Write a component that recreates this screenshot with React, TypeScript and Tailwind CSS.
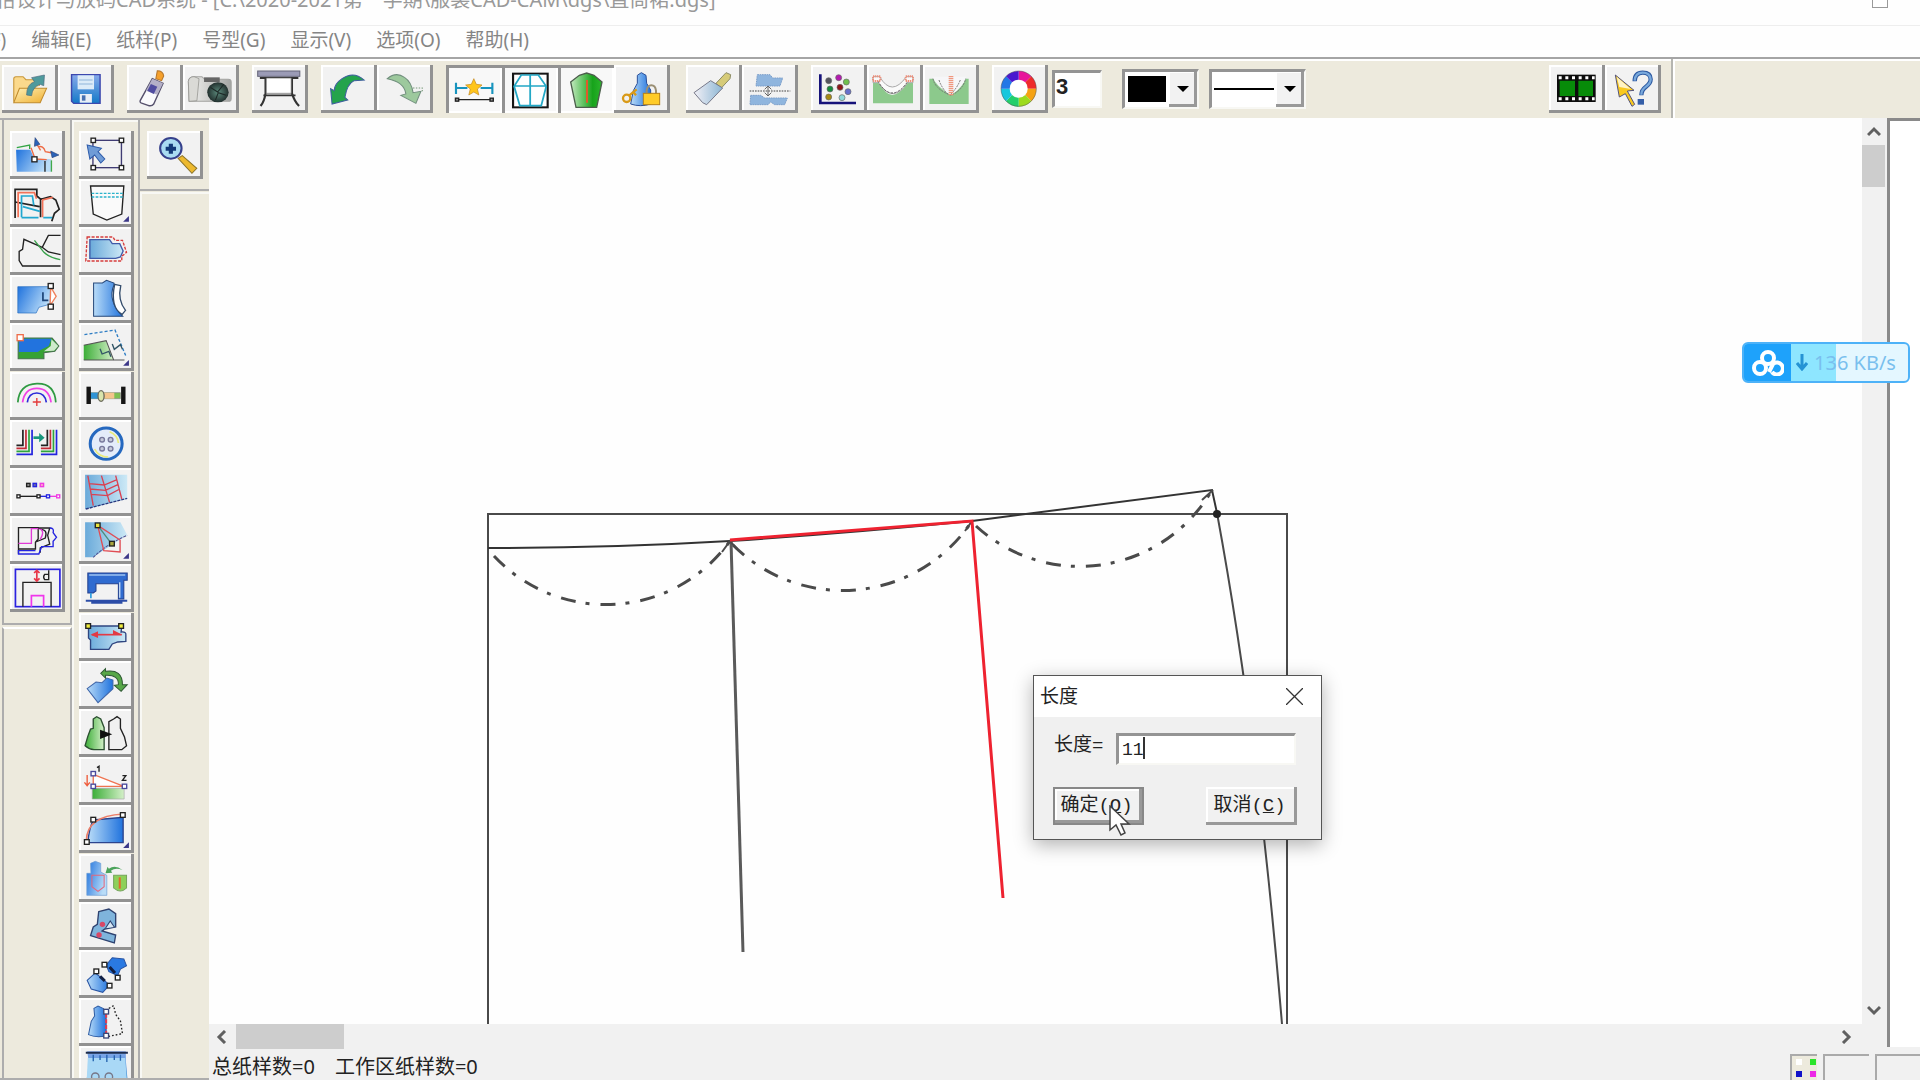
import React, { ReactNode } from "react";

type Tool = { name: string; box: string; art: ReactNode; pressed?: boolean };

const K = "#222";

const Sq = ({ x, y, s = 13, f = "#fff", c = K }: { x: number; y: number; s?: number; f?: string; c?: string }) => (
  <rect x={x - s / 2} y={y - s / 2} width={s} height={s} fill={f} stroke={c} strokeWidth="4" />
);

const Gradients = () => (
  <svg className="absolute h-0 w-0" aria-hidden="true">
    <defs>
      <linearGradient id="blue" x1="0" x2="1" y1="0" y2="0.4"><stop offset="0" stopColor="#1f72dd" /><stop offset="1" stopColor="#b9dcf8" /></linearGradient>
      <linearGradient id="blueR" x1="0" x2="1"><stop offset="0" stopColor="#b9dcf8" /><stop offset="1" stopColor="#1f72dd" /></linearGradient>
      <linearGradient id="sky" x1="0" x2="1"><stop offset="0" stopColor="#6aaada" /><stop offset="1" stopColor="#cde9f6" /></linearGradient>
      <linearGradient id="green" x1="0" x2="1"><stop offset="0" stopColor="#3cae38" /><stop offset="1" stopColor="#d4f0c8" /></linearGradient>
      <linearGradient id="greenR" x1="0" x2="1"><stop offset="0" stopColor="#c4eac0" /><stop offset="0.7" stopColor="#17a31b" /><stop offset="1" stopColor="#2cb52c" /></linearGradient>
      <linearGradient id="gold" x1="0" x2="1" y1="0" y2="1"><stop offset="0" stopColor="#fff0b8" /><stop offset="1" stopColor="#f0b030" /></linearGradient>
      <linearGradient id="steel" x1="0" x2="1"><stop offset="0" stopColor="#f2f0f6" /><stop offset="1" stopColor="#8cb6d4" /></linearGradient>
      <linearGradient id="disk" x1="0" x2="0" y1="0" y2="1"><stop offset="0" stopColor="#86a9ea" /><stop offset="1" stopColor="#1479c8" /></linearGradient>
      <linearGradient id="cam" x1="0" x2="1"><stop offset="0" stopColor="#f2f2f0" /><stop offset="1" stopColor="#a4a6a4" /></linearGradient>
      <radialGradient id="lens"><stop offset="0" stopColor="#5c8a7c" /><stop offset="1" stopColor="#22302e" /></radialGradient>
    </defs>
  </svg>
);

const fileTools: Tool[] = [
  { name: "打开", box: "5 195 157 144", art: <>
    <path d="M38 305V236q0-6 6-6h20l8 9h38v18" fill="#fbd98c" stroke="#c89638" strokeWidth="3" />
    <path d="M38 308l16-43h76l-18 43z" fill="url(#gold)" stroke="#c08a2c" strokeWidth="3" />
    <path d="M74 285q0-32 22-40l-8-12 36-8-2 32-10-4q-22 8-24 34z" fill="#4f9a9c" stroke="#4a6a80" strokeWidth="2" /></> },
  { name: "保存", box: "161 195 157 144", art: <>
    <path d="M199 224h80v86h-74l-6-6z" fill="url(#disk)" stroke="#3c48ae" strokeWidth="4" />
    <rect x="216" y="226" width="46" height="42" fill="#dcebf8" /><path d="M220 240h38M220 252h38" stroke="#a9c8e4" strokeWidth="4" />
    <rect x="222" y="282" width="34" height="26" fill="#e8eef6" /><rect x="228" y="286" width="10" height="16" fill="#4770b0" /></> },
];
const editTools: Tool[] = [
  { name: "读纸样", box: "357 195 157 144", art: <>
    <path d="M394 302l34-66 30 14-26 62q-6 8-16 4l-16-6q-8-2-6-8z" fill="#fafafc" stroke="#55506c" strokeWidth="4" />
    <path d="M410 272l18-36 30 14-16 34z" fill="#b4b0c8" /><path d="M414 272l10-20 18 8-10 22z" fill="#504ca0" />
    <path d="M438 236l4-24q16 0 18 16l-6 14z" fill="#f5a02c" stroke="#b5762c" strokeWidth="3" /></> },
  { name: "数码相机", box: "513 195 157 144", art: <>
    <path d="M530 304l-2-60q2-14 16-14h22l8 8h66q8 0 8 8v50q0 8-8 8z" fill="url(#cam)" stroke="#a2a2a0" strokeWidth="3" />
    <path d="M530 304l-2-60q2-14 16-14l14 6-6 66z" fill="#dadad6" stroke="#8c8c88" strokeWidth="2" />
    <path d="M572 232h44v14h-44z" fill="#666" /><circle cx="611" cy="277" r="30" fill="url(#lens)" /><path d="M590 262l20 14 18-24M604 300l8-22 22 8" stroke="#1d2826" strokeWidth="3" fill="none" /></> },
];
const plotTools: Tool[] = [
  { name: "绘图", box: "708 195 157 144", art: <>
    <rect x="724" y="213" width="118" height="16" fill="#9b9bb6" stroke="#66667a" strokeWidth="3" />
    <path d="M730 234h108M746 234v46q-4 26-14 38M820 234v46q8 26 20 38" stroke="#333" strokeWidth="6" fill="none" />
    <path d="M748 234h70v46h-70z" fill="#fff" stroke="#666" strokeWidth="2" /><path d="M740 286h90" stroke="#333" strokeWidth="5" /></> },
];
const undoTools: Tool[] = [
  { name: "撤消", box: "901 195 157 144", art: <path d="M928 266l4 46 44-12-8-8q6-40 26-50l28-2q-30-28-62-4-22 16-22 36z" fill="#24a34c" stroke="#3f5f9e" strokeWidth="3" /> },
  { name: "重做", box: "1057 195 157 144", art: <><path d="M1086 236q24-22 48-4 20 14 24 46l22-4-14 36-42-24 14-4q-4-36-52-46z" fill="#9dc99d" stroke="#72907e" strokeWidth="3" /><path d="M1158 264h26v10" stroke="#79997a" strokeWidth="3" strokeDasharray="4 4" fill="none" /></> },
];
const viewTools: Tool[] = [
  { name: "显示/隐藏变量标注", box: "1253 195 157 144", pressed: true, art: <>
    <path d="M1281 248v34M1383 248v34M1281 264h32M1350 264h33" stroke="#1794be" strokeWidth="6" />
    <path d="M1331 236l7 17 16 2-13 12 4 18-14-9-14 9 4-18-13-12 16-2z" fill="#ffc51c" stroke="#c38722" strokeWidth="2" />
    <path d="M1285 299h96" stroke={K} strokeWidth="4" /><Sq x={1284} y={299} s={9} f="#999" /><Sq x={1381} y={299} s={9} f="#999" /></> },
  { name: "显示/隐藏结构线", box: "1410 195 157 144", pressed: true, art: <>
    <rect x="1441" y="221" width="97" height="101" fill="#fff" stroke="#151515" strokeWidth="6" />
    <path d="M1464 225h48l22 34-14 58h-60l-16-58zM1445 258h90M1489 223v94" fill="none" stroke="#23a8c6" strokeWidth="5" /></> },
  { name: "显示/隐藏纸样", box: "60 195 168 144", pressed: true, art: <>
    <path d="M98 246l26-20 22-7 22 7 24 20-16 76h-62z" fill="url(#greenR)" stroke="#4c5e4c" strokeWidth="4" /><path d="M147 240v68" stroke="#e05a2c" strokeWidth="6" /></> },
  { name: "仅显示一个纸样", box: "230 195 168 144", art: <>
    <path d="M300 226l12-8 14 8 2 24 12 20v42q-30 10-60 0l8-40 12-22z" fill="url(#blueR)" stroke="#2a4f99" strokeWidth="3" />
    <circle cx="268" cy="295" r="11" fill="none" stroke="#d99a18" strokeWidth="7" /><path d="M276 286l22-18M288 276l8 10" stroke="#d99a18" strokeWidth="7" />
    <path d="M328 284v-12q2-16 14-16t14 16v12" fill="none" stroke="#9a8f74" strokeWidth="6" /><rect x="318" y="280" width="49" height="34" fill="#ffcb28" stroke="#b5801a" strokeWidth="3" /></> },
];
const paintTools: Tool[] = [
  { name: "将工作区的纸样收起", box: "436 195 168 144", art: <>
    <path d="M526 250l30-32 14 6-2 12-26 28z" fill="#d6cb78" stroke="#8c8c66" strokeWidth="3" />
    <path d="M460 278l50-36 36 22-48 50-12-6z" fill="url(#steel)" stroke="#77798a" strokeWidth="3" /></> },
  { name: "对称纸样", box: "604 195 168 144", art: <>
    <path d="M650 224h38l8 10h30l-8 24h-72zM630 286h30l12 8h68l-8 20h-30l-12-8-8 8h-54z" fill="#8fb5de" stroke="#7d9fca" strokeWidth="3" strokeDasharray="5 2" />
    <path d="M627 273h122" stroke="#444" strokeWidth="3" strokeDasharray="5 3" /><path d="M682 260v28M672 268l10-10 10 10M672 278l10 10 10-10" stroke="#666" strokeWidth="3" fill="none" /></> },
];
const gradeTools: Tool[] = [
  { name: "点放码表", box: "810 195 168 144", art: <>
    <path d="M838 223v86h107" stroke="#16127a" strokeWidth="8" fill="none" />
    {[[863, 242, "#555560"], [893, 233, "#b31ab0"], [916, 246, "#6fc04e"], [867, 267, "#178a3c"], [897, 262, "#8e1518"], [921, 275, "#6670cc"], [863, 291, "#a58912"], [903, 293, "#8fdadb"]].map(([x, y, c]) => (
      <circle key={String(x) + String(y)} cx={x as number} cy={y as number} r="9" fill={c as string} stroke="#666" strokeWidth="2" />))}</> },
  { name: "定型放码", box: "980 195 168 144", art: <>
    <path d="M998 246l20 2q36 74 80 0l20-2v64H998z" fill="#8cc98c" /><path d="M998 230h20q36 62 80 0h20v18h-16q-44 66-88 0h-16z" fill="#fafafa" stroke="#aaa" strokeWidth="3" />
    <path d="M1012 242q42 74 92 0" fill="none" stroke="#555" strokeWidth="3" strokeDasharray="7 4" /><path d="M998 229h22v14h-22zM1096 229h22v14h-22z" fill="none" stroke="#ed907c" strokeWidth="6" strokeDasharray="4 2" /></> },
  { name: "等幅高放码", box: "1148 195 168 144", art: <>
    <path d="M1167 236h118v76h-118z" fill="#8cc98c" /><path d="M1176 230h102q-8 30-46 56-44-26-56-56z" fill="#f6f6f8" />
    <path d="M1178 236q6 32 54 50 36-16 44-50M1196 240q8 24 26 42M1260 240q-10 24-28 42" fill="none" stroke="#777" strokeWidth="3" strokeDasharray="6 3" /><path d="M1232 228v58" stroke="#f0977e" strokeWidth="14" strokeDasharray="4 2" /></> },
];

const wheel: [string, string][] = [
  ["#e8149b", "M1436 213A53 53 0 0 1 1474 229L1456 247A27 27 0 0 0 1436 239Z"], ["#ee2b2b", "M1474 229A53 53 0 0 1 1489 266L1463 266A27 27 0 0 0 1456 247Z"],
  ["#f5a214", "M1489 266A53 53 0 0 1 1474 304L1456 285A27 27 0 0 0 1463 266Z"], ["#9ddb1d", "M1474 304A53 53 0 0 1 1436 320L1436 293A27 27 0 0 0 1456 285Z"],
  ["#23cf6b", "M1436 320A53 53 0 0 1 1398 304L1416 285A27 27 0 0 0 1436 293Z"], ["#18c7dd", "M1398 304A53 53 0 0 1 1383 266L1409 266A27 27 0 0 0 1416 285Z"],
  ["#2277e6", "M1383 266A53 53 0 0 1 1398 229L1416 247A27 27 0 0 0 1409 266Z"], ["#4a18cf", "M1398 229A53 53 0 0 1 1436 213L1436 239A27 27 0 0 0 1416 247Z"],
];
const colorTools: Tool[] = [{ name: "颜色设置", box: "1356 195 168 144", art: <>{wheel.map(([c, d]) => <path key={c} d={d} fill={c} />)}<circle cx="1436" cy="266" r="53" fill="none" stroke="#555" strokeOpacity="0.5" strokeWidth="3" /><circle cx="1436" cy="266" r="26" fill="#fff" /></> }];
const helpTools: Tool[] = [
  { name: "播放演示", box: "148 195 168 144", art: <>
    <rect x="172" y="224" width="116" height="82" fill="#0c0c0c" /><path d="M180 242h46v46h-46zM236 242h44v46h-44z" fill="#078b09" />
    <path d="M177 233h108M177 296h108" stroke="#fff" strokeWidth="9" strokeDasharray="9 11" /></> },
  { name: "帮助", box: "315 195 168 144", art: <>
    <path d="M346 225l56 46-20 2 22 40-8 6-20-38-18 10z" fill="#f9c91f" stroke="#55557c" strokeWidth="3" /><path d="M350 230l42 37-34-6z" fill="#fff3c4" />
    <path d="M404 244q0-26 24-26t24 20q0 12-14 22t-14 26" fill="none" stroke="#2e5aa2" strokeWidth="13" /><path d="M404 242q2-24 24-24t24 20q0 12-14 22t-14 24" fill="none" stroke="#79a9dc" strokeWidth="7" /><rect x="413" y="297" width="19" height="17" fill="#355ea8" /></> },
];

const designTools: Tool[] = [
  { name: "选择", box: "30 48 162 144", art: <>
    <path d="M48 104h42l12 28h50v38H50z" fill="url(#blue)" /><path d="M50 98l38-8v12" stroke="#34a544" strokeWidth="4" fill="none" />
    <path d="M92 98l12 34 34 2" stroke="#ee6a44" strokeWidth="4" fill="none" /><path d="M112 96q16-6 22 14l22 4M106 82l14 24" stroke="#ee6a44" strokeWidth="4" fill="none" />
    <path d="M104 68l14 20-16 6zM150 108l24 12-20 8z" fill="#2a62b8" stroke="#28457c" strokeWidth="2" /><path d="M133 138v32" stroke={K} strokeWidth="4" /><path d="M152 136v34" stroke="#43a949" strokeWidth="4" /><Sq x={102} y={133} s={15} /></> },
  { name: "结构线", box: "30 193 162 144", art: <>
    <path d="M45 310v-86h64v20l12 10 28-8 16 10 10 28-14 12-8 24M45 262l72 14M120 250v58" fill="none" stroke={K} strokeWidth="5" />
    <path d="M54 308v-74h48l6 18M126 308v-52l30-8" fill="none" stroke="#f4745a" strokeWidth="5" /><path d="M64 308v-64h32l4 28M68 276l50 14M64 309h50M128 309h26" fill="none" stroke="#22a7d0" strokeWidth="5" /></> },
  { name: "智能笔", box: "30 338 162 144", art: <>
    <path d="M179 363h-36l-18 36-54-24-4 30-10 6v28l10 16h112M125 399l18 14 36 8" fill="none" stroke={K} strokeWidth="4" />
    <path d="M102 378l28 36q16 16 48 22" fill="none" stroke="#38a14a" strokeWidth="4" /></> },
  { name: "剪断线", box: "30 482 162 144", art: <>
    <path d="M53 517h96v52l-34 10-8 17H53z" fill="url(#blue)" stroke="#226bc0" strokeWidth="2" /><path d="M127 534v24h16" stroke="#1c4377" strokeWidth="5" fill="none" />
    <path d="M150 518l-2 56 18-28z" stroke="#ef815c" strokeWidth="4" fill="#fff" /><Sq x={150} y={515} s={15} /><Sq x={150} y={577} s={15} /></> },
  { name: "旋转粘贴", box: "30 627 162 144", art: <>
    <path d="M54 672h100l20 24-12 16-32 4v18H54z" fill="#36a233" stroke="#46704c" strokeWidth="3" /><path d="M56 674h96l-8 22-24 12-8 6H56z" fill="#2273de" /><path d="M152 676l20 20-12 14-30 2 20-16z" fill="#cfeacc" /><Sq x={60} y={671} s={18} c="#ee6e4c" /></> },
  { name: "圆弧", box: "30 6 162 144", art: <>
    <path d="M53 97q4-54 56-56t56 56" fill="none" stroke="#2f9a42" strokeWidth="5" /><path d="M67 97q6-42 42-42t42 42" fill="none" stroke="#f040e6" strokeWidth="5" /><path d="M81 97q4-28 28-28t28 28" fill="none" stroke="#2b2bd8" strokeWidth="5" /><path d="M97 96h24M109 84v24" stroke="#e33b3b" strokeWidth="4" /></> },
  { name: "平行线", box: "30 151 162 144", art: <>
    {[[0, "#2323de"], [9, "#2fa53c"], [18, "#c42c38"], [27, K]].map(([o, c]) => { const n = o as number; return (
      <path key={n} d={`M${95 - n} 180v${74 - n}H49M${167 - n} 180v${74 - n}H121`} fill="none" stroke={c as string} strokeWidth="5" />); })}
    <path d="M99 204h22" stroke="#17967c" strokeWidth="8" /><path d="M116 190l16 14-16 14z" fill="#17967c" /></> },
  { name: "点对齐", box: "30 295 162 144", art: <>
    <path d="M55 380h60" stroke={K} strokeWidth="4" /><path d="M115 380h28" stroke="#2424e0" strokeWidth="4" /><path d="M143 380h28" stroke="#ef3be3" strokeWidth="4" />
    <Sq x={55} y={380} s={9} /><Sq x={114} y={380} s={9} /><Sq x={142} y={380} s={9} c="#2424e0" /><Sq x={172} y={380} s={9} c="#ef3be3" /><Sq x={84} y={346} s={10} f="#888" /><Sq x={103} y={346} s={10} c="#2424e0" f="#66a" /><Sq x={124} y={346} s={10} c="#ef3be3" f="#f9c" /></> },
  { name: "套排", box: "30 440 162 144", art: <>
    <path d="M55 475h58v34l-8 10v20H55zM55 539v14M120 480q22 0 14 26l-28 12" fill="none" stroke={K} strokeWidth="4" /><path d="M55 522h38v-44h22q20 4 4 32" fill="none" stroke="#e23ad8" strokeWidth="4" /><path d="M113 476h34l-6 22 6 26-28 12v14" fill="none" stroke={K} strokeWidth="4" />
    <path d="M147 476q14 0 10 14l10 14-10 12v16h-34l-8 22H55v-10h50" fill="none" stroke="#2525e0" strokeWidth="4" /></> },
  { name: "测量", box: "30 585 162 144", art: <>
    <rect x="46" y="601" width="131" height="112" fill="none" stroke="#2b22e0" strokeWidth="5" /><path d="M68 713v-73h83v73" fill="none" stroke={K} strokeWidth="4" /><path d="M93 713v-33h36v33" fill="none" stroke="#f036ec" strokeWidth="5" />
    <path d="M109 606v28M101 612l8-8 8 8M101 628l8 8 8-8" fill="none" stroke="#e73648" strokeWidth="5" /><path d="M144 604v28h-12q-6-8 0-16h12" fill="none" stroke={K} strokeWidth="4" /></> },
];

const Corner = ({ x, y }: { x: number; y: number }) => <path d={`M${x} ${y}v-17l-17 17z`} fill="#3b3788" />;
const patternTools: Tool[] = [
  { name: "选择纸样控制点", box: "238 48 162 144", art: <>
    <rect x="279" y="76" width="84" height="82" fill="none" stroke="#403c74" strokeWidth="4" /><Sq x={280} y={76} /><Sq x={363} y={76} /><Sq x={280} y={158} /><Sq x={363} y={158} />
    <path d="M262 90l42 10-10 10 20 22-12 12-18-24-14 12z" fill="#6f9bd6" stroke="#2e5cab" strokeWidth="3" /></> },
  { name: "缝迹线", box: "238 193 162 144", art: <>
    <path d="M272 214h98l-6 84-44 18-40-18z" fill="#fafafa" stroke={K} strokeWidth="4" /><path d="M275 236h92M275 247h92" stroke="#2bb3cb" strokeWidth="4" strokeDasharray="8 4" /><Corner x={385} y={321} /></> },
  { name: "加缝份", box: "238 338 162 144", art: <>
    <path d="M270 376h58l8 12h22l10 22-8 18-14 4h-76z" fill="url(#sky)" stroke="#3e5aa8" strokeWidth="4" /><path d="M262 368h76l6 10h22l12 36-14 12v14H258z" fill="none" stroke="#d63c3c" strokeWidth="4" strokeDasharray="9 4" /></> },
  { name: "做衬", box: "238 482 162 144", art: <>
    <path d="M281 506h26l12-8 22 8v6q-20 46 26 94h-86z" fill="url(#blueR)" stroke="#27487a" strokeWidth="3" /><path d="M343 510l18 4q-10 44 14 74l-10 12q-36-20-22-90z" fill="#fff" stroke="#334c6c" strokeWidth="4" /></> },
  { name: "眼位", box: "238 627 162 144", art: <>
    <path d="M252 694l66-14 22 58h-88z" fill="url(#green)" /><path d="M252 694l66-14 22 58" fill="none" stroke="#555" strokeWidth="3" /><path d="M254 662l90-14 32 78" fill="none" stroke="#2c7cc4" strokeWidth="4" strokeDasharray="9 6" /><path d="M300 704l6 16 20-8 6 16M336 690l6 16 18-14 6 14" fill="none" stroke="#356" strokeWidth="4" /><path d="M252 738h120" stroke="#555" strokeWidth="3" /><Corner x={385} y={755} /></> },
  { name: "钻孔", box: "238 6 162 144", art: <>
    <path d="M272 68h88v18h-88z" fill="#7ec050" stroke="#888" strokeWidth="2" /><path d="M272 68h30v18h-30z" fill="#2f94d6" /><path d="M310 68h32v18h-32z" fill="#f4c48c" /><rect x="260" y="50" width="13" height="52" fill="#151515" /><rect x="362" y="50" width="13" height="52" fill="#151515" /><ellipse cx="303" cy="78" rx="9" ry="16" fill="#d9e4ac" stroke="#6c6c5c" strokeWidth="4" /></> },
  { name: "扣位", box: "238 151 162 144", art: <>
    <circle cx="318" cy="222" r="47" fill="#e4ecfa" stroke="#2568bf" strokeWidth="9" /><path d="M284 238q12 24 40 24M328 186q24 10 26 34" stroke="#e9ec7a" strokeWidth="5" fill="none" />
    {[[306, 210], [331, 210], [306, 237], [331, 237]].map(([x, y]) => <circle key={x + "-" + y} cx={x} cy={y} r="7" fill="#c4c8d8" stroke="#77789c" strokeWidth="4" />)}</> },
  { name: "皱褶", box: "238 295 162 144", art: <>
    <path d="M256 315h124v72l-124 32z" fill="url(#sky)" /><path d="M264 318l16 90M304 318l24 80M346 318l18 70M268 342l44 4 38-16M270 358l46 4 38-18M274 374l48 4 36-20" fill="none" stroke="#d94252" strokeWidth="4" /><path d="M258 418l122-32" stroke="#2a3a80" strokeWidth="4" strokeDasharray="9 3" /></> },
  { name: "分割", box: "238 440 162 144", art: <>
    <path d="M256 459h104l20 38-70 46-30 21h-24z" fill="url(#sky)" /><path d="M280 564q40-40 100-66" fill="none" stroke="#4e4e90" strokeWidth="3" strokeDasharray="9 3" /><path d="M293 468l66 44v36l-48-4z" fill="none" stroke="#e04c54" strokeWidth="4" /><path d="M293 468l40 54" stroke="#4c8c7c" strokeWidth="4" /><Sq x={293} y={468} s={14} f="#e8e53c" /><Sq x={335} y={523} s={14} f="#a8a53c" /><Corner x={385} y={568} /></> },
  { name: "缝纫", box: "238 585 162 144", art: <>
    <path d="M264 612h116v22h-10v56h-16v-46h-66v22l-8 6h-16z" fill="#2f6bd0" stroke="#24418e" strokeWidth="3" /><path d="M268 618h106" stroke="#9cc0f0" strokeWidth="5" /><path d="M258 692h122v6h-14v6h-92v-6h-16z" fill="#2c4da8" /><path d="M273 672v16" stroke="#2d9de0" strokeWidth="5" /><path d="M358 640v46" stroke="#c8dcf6" strokeWidth="4" /></> },
  { name: "布纹线", box: "238 -21 162 144", art: <>
    <path d="M266 18h98l-2 18q16-2 14 10v18l-24 2-16 6-10 16h-54v-28l-6-6z" fill="url(#sky)" stroke="#2f4580" strokeWidth="4" /><path d="M276 44h88" stroke="#e33a44" strokeWidth="5" /><path d="M272 44l22-10v20zM366 44l-28-14v14z" fill="#e33a44" /><Sq x={265} y={18} s={14} f="#f2ee3e" /><Sq x={362} y={18} s={14} f="#f2ee3e" /></> },
  { name: "旋转", box: "238 123 162 144", art: <>
    <path d="M262 206l26-20 18 2 14-14 18 6v26l-44 42z" fill="url(#blueR)" stroke="#4067aa" strokeWidth="3" /><path d="M302 160l14-14v8q50-8 50 40h14l-18 20-20-18 12-2q2-30-38-28v8z" fill="#58a848" stroke="#2f5a34" strokeWidth="3" /></> },
  { name: "水平垂直翻转", box: "238 268 162 144", art: <>
    <path d="M280 298l10-7 12 7 10 26v66h-30q-16-2-26-12l8-28 8-22 8-2z" fill="url(#green)" stroke="#2b5030" strokeWidth="4" /><path d="M326 390v-84l14-8 10-7 10 7v28l12 26 6 26-14 12z" fill="#f0f0f0" stroke={K} strokeWidth="4" /><path d="M300 330l36 14-36 14z" fill="#0f0f0f" /></> },
  { name: "水平垂直校正", box: "238 412 162 144", art: <>
    <path d="M277 506h94v32h-94z" fill="url(#green)" stroke="#aaa" strokeWidth="2" /><path d="M280 464l90 36h-90z" fill="#fff" stroke="#ef7452" strokeWidth="4" /><path d="M262 466v34M254 488l8 10 8-10" fill="none" stroke="#ef5c3c" strokeWidth="4" /><Sq x={280} y={462} c="#4a4a9c" /><Sq x={280} y={500} c="#4a4a9c" /><Sq x={372} y={500} c="#4a4a9c" /><path d="M291 444l6-4v16M366 468h10l-10 14h12" fill="none" stroke={K} strokeWidth="4" /></> },
  { name: "重新顺滑曲线", box: "238 557 162 144", art: <>
    <path d="M280 602l88-8v76H264q4-44 16-68z" fill="url(#blueR)" stroke="#2c448e" strokeWidth="4" /><path d="M260 664q0-74 108-80" fill="none" stroke="#ec7e68" strokeWidth="5" /><Sq x={280} y={601} s={14} /><Sq x={367} y={587} s={14} /><Sq x={261} y={668} s={14} /><Corner x={385} y={686} /></> },
  { name: "曲线替换", box: "238 -18 162 144", art: <>
    <path d="M272 10l14-6 16 6v26l18 10v60h-59V40h12z" fill="url(#blue)" stroke="#6b9bd2" strokeWidth="2" /><path d="M276 46h36v34l-18 14-18-14z" fill="none" stroke="#e5657a" strokeWidth="3" /><path d="M366 30q-22-18-40-4l-4-6-6 20 20-2-4-6q14-10 34-2z" fill="#4ba35b" /><path d="M340 46h38v38q-18 18-38 0z" fill="#8ed05a" stroke="#75a45c" strokeWidth="3" /><path d="M358 52v34" stroke="#e06a2c" strokeWidth="6" /></> },
  { name: "纸样变闭合辅助线", box: "238 127 162 144", art: <>
    <path d="M296 156l30-8 20 14v40l-32 6-8 6 40 12-4 24-70-22 8-26 12-8z" fill="#7fb4dc" stroke="#2e4270" strokeWidth="4" /><path d="M316 206l14-22 12 18" fill="#d6e6f4" stroke="#2e4270" strokeWidth="3" /><circle cx="307" cy="194" r="8" fill="#d84866" /><circle cx="297" cy="226" r="8" fill="#d84866" /></> },
  { name: "合并纸样", box: "238 271 162 144", art: <>
    <path d="M318 316l18-22 34 4 8 20-18 10-8 20-26-12z" fill="#2a79e2" stroke="#2854a4" strokeWidth="3" /><path d="M262 362l24-22 20 16 22 20-20 22-34-10z" fill="url(#blueR)" stroke="#2854a4" strokeWidth="3" /><path d="M328 322l16 18M300 350l14 14" stroke="#111f44" strokeWidth="9" /><Sq x={313} y={315} s={14} /><Sq x={289} y={335} s={14} /><Sq x={352} y={354} s={14} /><Sq x={328} y={378} s={14} /></> },
  { name: "纸样对称", box: "238 415 162 144", art: <>
    <path d="M282 446l12-7 16 8 8 12v70q-32 6-52-4l8-40 10-16z" fill="url(#blueR)" stroke="#2d5ca4" strokeWidth="3" /><path d="M318 462v60" stroke="#e63a4c" strokeWidth="6" strokeDasharray="12 5" /><path d="M326 446l14-8 6 26 14 20 6 38-40 8" fill="none" stroke={K} strokeWidth="4" strokeDasharray="5 6" /><Sq x={318} y={456} s={14} c="#3c4878" /><Sq x={318} y={528} s={14} c="#3c4878" /></> },
  { name: "缩水", box: "238 560 162 144", art: <>
    <path d="M262 576h114v28l6 70H258l10-60z" fill="url(#disk)" /><path d="M264 596h110l6 78H260z" fill="#a9d8f6" /><path d="M258 580h124" stroke="#1d2c4c" strokeWidth="6" /><path d="M280 586v20M300 588v14M320 586v22M342 588v14M360 586v18" stroke="#2563ae" strokeWidth="4" /><circle cx="286" cy="652" r="11" fill="none" stroke="#778" strokeWidth="4" /><circle cx="326" cy="652" r="11" fill="none" stroke="#778" strokeWidth="4" /></> },
];
const zoomTool: Tool = { name: "放大", box: "444 48 162 144", art: <>
  <path d="M534 130l12-8 42 38-14 15z" fill="#edb92e" stroke="#8c7428" strokeWidth="3" /><circle cx="513" cy="100" r="31" fill="#a9dcf2" stroke="#36418c" strokeWidth="6" /><path d="M513 86v30M498 101h30" stroke="#123a78" strokeWidth="12" /></> };

function ToolButton({ tool, size }: { tool: Tool; size: string }) {
  const bevel = tool.pressed
    ? "bg-[#f8f8f8] shadow-[inset_3px_3px_0_#929292,inset_-2px_-2px_0_#fff]"
    : "bg-[#f2f2f2] shadow-[inset_-3px_-3px_0_#929292,inset_2px_2px_0_#fff]";
  return (
    <button type="button" aria-label={tool.name} className={`block shrink-0 ${size} ${bevel}`}>
      <svg viewBox={tool.box} preserveAspectRatio="none" className="block h-full w-full" aria-hidden="true">{tool.art}</svg>
    </button>
  );
}

const Bar = ({ tools }: { tools: Tool[] }) => (
  <div className="flex">{tools.map((t) => <ToolButton key={t.name} tool={t} size="h-12 w-14" />)}</div>
);

function Column({ tools }: { tools: Tool[] }) {
  const groups: Tool[][] = [];
  for (let i = 0; i < tools.length; i += 5) groups.push(tools.slice(i, i + 5));
  return (
    <div className="flex flex-col gap-px">
      {groups.map((g) => <div key={g[0].name}>{g.map((t) => <ToolButton key={t.name} tool={t} size="h-12 w-[55px]" />)}</div>)}
    </div>
  );
}

const sunken = "border-t-[3px] border-l-[3px] border-r-2 border-b-2 border-t-[#949494] border-l-[#949494] border-r-[#f8f8f4] border-b-[#f8f8f4]";

function Combo({ label, width, children }: { label: string; width: string; children: ReactNode }) {
  return (
    <div className={`relative flex h-10 bg-white ${width} ${sunken}`}>
      <select aria-label={label} className="absolute inset-0 h-full w-full appearance-none opacity-0"><option>{label}</option></select>
      <div className="pointer-events-none flex flex-1 items-center justify-center">{children}</div>
      <div className="pointer-events-none flex w-7 items-center justify-center bg-[#f2f2f2] shadow-[inset_-3px_-3px_0_#999,inset_1px_1px_0_#fff]">
        <svg className="h-2 w-3" viewBox="0 0 12 8"><path d="M0 1h12L6 7z" /></svg>
      </div>
    </div>
  );
}

const menus = ["文件(F)", "编辑(E)", "纸样(P)", "号型(G)", "显示(V)", "选项(O)", "帮助(H)"];
const dash = "15 10 4 11";

function Chevron({ d }: { d: string }) {
  return <svg className="h-[14px] w-[14px]" viewBox="0 0 14 14"><path d={d} fill="none" stroke="#606060" strokeWidth="3" /></svg>;
}

function Drawing() {
  return (
    <svg className="absolute inset-0 h-full w-full" aria-label="直筒裙">
      <g transform="translate(-209 -118)" fill="none" strokeWidth="2" stroke="#4a4a4a">
        <path d="M488 1040V514H1287V1040" />
        <path d="M488 548Q610 548 730 541Q850 533 972 521L1212 490L1217 513" stroke="#333" />
        <path d="M1217 513Q1258 735 1282 1024" />
        <path d="M731 541L743 952" strokeWidth="3" stroke="#5a5a5a" />
        <path d="M494 556A153 153 0 0 0 730 541M733 545A155 155 0 0 0 972 521M976 526A153 153 0 0 0 1212 490" strokeDasharray={dash} strokeWidth="3" />
        <path d="M722 552L730 541L737 549M965 531L972 521M1202 500L1213 490" />
        <path d="M730 540L972 521L1003 898" stroke="#ee2230" strokeWidth="3" />
        <circle cx="1217" cy="514" r="4" fill="#222" stroke="none" />
      </g>
    </svg>
  );
}

function LengthDialog() {
  const bevel = "h-[38px] w-[91px] bg-[#f1f1f1] leading-none";
  return (
    <form role="dialog" aria-label="长度" className="absolute left-[824px] top-[557px] flex w-[289px] flex-col border border-[#555] bg-[#f0f0f0] text-[19px] text-[#222] shadow-[0_5px_18px_rgba(0,0,0,0.3)]">
      <div className="flex h-[41px] items-center justify-between bg-white pl-[6px] pr-[18px]">
        <span>长度</span>
        <button type="button" aria-label="关闭"><svg className="h-[17px] w-[17px]" viewBox="0 0 17 17"><path d="M0 0l17 17M17 0L0 17" stroke="#333" strokeWidth="1.3" /></svg></button>
      </div>
      <div className="flex items-start gap-2 pl-5 pt-4 font-['Liberation_Mono','Noto_Sans_CJK_SC',monospace]">
        <label htmlFor="len" className="w-[54px] pt-[2px] leading-[22px]">长度=</label>
        <input id="len" defaultValue="11" size={2} className={`h-8 w-[180px] bg-white pl-[3px] font-['Liberation_Mono',monospace] text-[18px] outline-none ${sunken}`} />
        <span className="-ml-[161px] mt-1 h-[22px] w-[2px] bg-[#333]" />
      </div>
      <div className="flex justify-between px-[19px] pb-[14px] pr-[24px] pt-[22px] font-['Liberation_Mono','Noto_Sans_CJK_SC',monospace]">
        <button type="button" className={`${bevel} border-2 border-[#888] pr-1 shadow-[inset_-3px_-3px_0_#999,inset_2px_2px_0_#fff]`}>确定(<u>O</u>)</button>
        <button type="button" className={`${bevel} pr-1 shadow-[inset_-3px_-3px_0_#999,inset_2px_2px_0_#fff]`}>取消(<u>C</u>)</button>
      </div>
      <svg className="absolute left-[75px] top-[129px] h-[31px] w-[22px]" viewBox="0 0 22 31"><path d="M1 1v24l6-5 5 10 4-2-4-9h8z" fill="#fff" stroke="#444" strokeWidth="1.5" /></svg>
    </form>
  );
}

function SpeedBadge() {
  return (
    <div className="absolute right-[10px] top-[224px] z-10 flex h-[41px] w-[168px] items-center overflow-hidden rounded-md border-2 border-[#4db2f8] bg-gradient-to-r from-[#8ee6ff] from-[56%] to-[#e4f7ff] to-[56%] text-[20px] text-[#79bfee]">
      <span className="flex h-full w-[47px] items-center justify-center bg-[#1ea2fb]">
        <svg className="h-[26px] w-[32px]" viewBox="0 0 32 26" fill="none" stroke="#fff" strokeWidth="4"><circle cx="16" cy="8" r="6" /><circle cx="8" cy="18" r="6" /><path d="M17 22L21 14A6 6 0 1 1 20 22" /></svg>
      </span>
      <svg className="ml-[5px] h-[17px] w-3" viewBox="0 0 12 17"><path d="M6 0v14M1 9l5 6 5-6" fill="none" stroke="#2593d4" strokeWidth="3" /></svg>
      <span className="ml-[6px] whitespace-nowrap">136 KB/s</span>
    </div>
  );
}

const groove = "border-[#adadad]";

export default function App() {
  return (
    <div className="flex h-screen flex-col overflow-hidden bg-[#f1f1f1] font-['Noto_Sans','Noto_Sans_CJK_SC',sans-serif] text-[19px] text-[#222]">
      <Gradients />
      <header className="flex h-[25px] shrink-0 items-start justify-between bg-[#fefefe] text-[#999]">
        <h1 className="-ml-1 -mt-[14px] whitespace-nowrap text-[20px] leading-7">怡设计与放码CAD系统 - [C:\2020-2021第一学期\服装CAD-CAM\dgs\直筒裙.dgs]</h1>
        <button type="button" aria-label="最大化" className="mr-8 h-2 w-4 border border-t-0 border-[#999]" />
      </header>
      <nav className="flex h-8 shrink-0 items-center gap-[25px] border-t border-[#eee] bg-[#fefefe] pb-[2px] text-[#858585]">
        {menus.map((m, i) => <button type="button" key={m} className={i === 0 ? "-ml-[53px] whitespace-nowrap" : "whitespace-nowrap"}>{m}</button>)}
      </nav>
      <div className="flex h-[61px] shrink-0 items-center border-t-2 border-[#a5a5a5] bg-[#edeadd] shadow-[inset_0_2px_0_#fff]">
        <div className="flex items-center gap-[13px] pl-[2px]">
          <Bar tools={fileTools} /><Bar tools={editTools} /><Bar tools={plotTools} /><Bar tools={undoTools} /><Bar tools={viewTools} />
        </div>
        <div className="flex items-center gap-[13px] pl-4">
          <Bar tools={paintTools} /><Bar tools={gradeTools} /><Bar tools={colorTools} />
        </div>
        <input aria-label="号型数" defaultValue="3" size={2} className={`ml-[4px] h-[38px] w-[50px] bg-white pb-1 pl-px font-['Liberation_Sans',sans-serif] text-[22px] font-bold ${sunken}`} />
        <div className="ml-5 flex gap-[10px]">
          <Combo label="线颜色" width="w-[77px]"><span className="h-[26px] w-[38px] bg-black" /></Combo>
          <Combo label="线类型" width="w-[97px]"><span className="h-[2px] w-[60px] bg-black" /></Combo>
        </div>
        <div className="ml-[243px]"><Bar tools={helpTools} /></div>
        <div className="ml-[10px] h-full w-1 border-l-2 border-[#b5b5b0] bg-white" />
      </div>

      <main className="relative flex min-h-0 flex-1">
        <aside className={`flex w-[209px] shrink-0 items-stretch overflow-hidden border-b-2 border-t-2 bg-[#edeadd] pl-[2px] ${groove}`}>
          <div className="flex w-[70px] shrink-0 flex-col">
            <div className={`border-l-2 border-b-2 border-r-2 pb-[11px] pl-[6px] pt-[11px] ${groove}`}><Column tools={designTools} /></div>
            <div className={`mt-[2px] flex-1 border-l-2 border-r-2 border-t-2 border-t-white ${groove}`} />
          </div>
          <div className={`w-[68px] shrink-0 border-r-2 pl-[7px] pt-[11px] shadow-[inset_2px_2px_0_#f8f8f4] ${groove}`}><Column tools={patternTools} /></div>
          <div className="flex flex-1 flex-col">
            <div className={`border-b-2 pb-[10px] pl-[7px] pt-[11px] ${groove}`}><ToolButton tool={zoomTool} size="h-12 w-14" /></div>
            <div className="mt-px flex-1 border-l-2 border-t-2 border-[#f8f8f4]" />
          </div>
        </aside>
        <section className="flex min-w-0 flex-1 flex-col">
          <div className="flex min-h-0 flex-1">
            <div className="flex min-w-0 flex-1 flex-col">
              <div className="flex min-h-0 flex-1">
                <div className="relative min-w-0 flex-1 overflow-hidden bg-[#fefefe]">
                  <Drawing />
                  <LengthDialog />
                </div>
                <div className="flex w-[25px] flex-col items-center justify-between pb-[7px] pr-[2px]">
                  <div className="flex w-full flex-col items-center">
                    <span className="flex h-[27px] items-center"><Chevron d="M1 10l6-6 6 6" /></span>
                    <span className="h-[42px] w-full bg-[#cdcdcd]" />
                  </div>
                  <Chevron d="M1 4l6 6 6-6" />
                </div>
              </div>
              <div className="flex h-[25px] shrink-0 items-center justify-between pl-[6px] pr-[34px]">
                <div className="flex h-full items-center gap-[7px]"><Chevron d="M10 1L4 7l6 6" /><span className="h-full w-[108px] bg-[#cdcdcd]" /></div>
                <Chevron d="M4 1l6 6-6 6" />
              </div>
            </div>
            <div className="mb-[2px] w-[33px] border-l-[3px] border-t-[3px] border-[#8a8a8a] bg-white" />
          </div>
          <footer className="flex h-[31px] shrink-0 items-stretch justify-between">
            <div className="flex gap-5 whitespace-nowrap pl-[3px] pt-1 text-[20px] leading-7 text-[#222]"><span>总纸样数=0</span><span>工作区纸样数=0</span></div>
            <div className="flex gap-[6px] pt-[5px]">
              <div className="grid w-[27px] grid-cols-2 place-content-start gap-x-[6px] gap-y-[6px] border-l-2 border-t-2 border-[#aaa] bg-[#edeadd] pl-[4px] pt-[3px]">
                <i className="h-[6px] w-[6px] bg-white" /><i className="h-[6px] w-[6px] bg-[#2be42b]" /><i className="h-[6px] w-[6px] bg-[#1212c8]" /><i className="h-[6px] w-[6px] bg-[#ec28e6]" />
              </div>
              <div className="w-[46px] border-l-2 border-t-2 border-[#aaa]" />
              <div className="w-[45px] border-l-2 border-t-2 border-[#aaa]" />
            </div>
          </footer>
        </section>
        <SpeedBadge />
      </main>
    </div>
  );
}
